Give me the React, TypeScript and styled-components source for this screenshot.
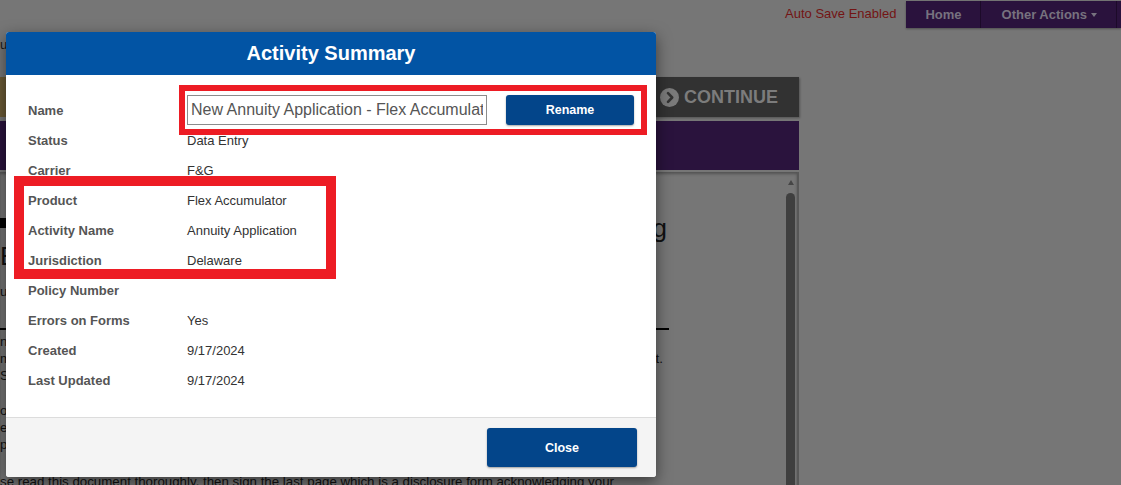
import React from 'react';
import styled, { createGlobalStyle } from 'styled-components';

const GlobalStyle = createGlobalStyle`
  *, *::before, *::after { box-sizing: border-box; }
  html, body { margin: 0; padding: 0; }
  body {
    background: #767676;
    font-family: "Liberation Sans", Arial, sans-serif;
    overflow: hidden;
  }
`;

const Page = styled.div`
  position: relative;
  width: 1121px;
  height: 485px;
  overflow: hidden;
  background: #767676;
`;

const TopBar = styled.header`
  display: flex;
  justify-content: flex-end;
  align-items: flex-start;
  height: 28px;
`;

const AutoSave = styled.span`
  color: #731414;
  font-size: 13px;
  line-height: 28px;
  margin-right: 10px;
`;

const Nav = styled.nav`
  display: flex;
  margin-top: 1px;
  height: 27px;
  padding-right: 4px;
  background: #2a123d;
  box-shadow: 0 1px 2px rgba(0, 0, 0, 0.35);
`;

const NavItem = styled.div<{ $pl: number; $pr: number }>`
  display: flex;
  align-items: center;
  padding: 0 ${p => p.$pr}px 0 ${p => p.$pl}px;
  border-right: 1px solid #1c0a29;
  color: #77727f;
  font-size: 13px;
  font-weight: bold;
  line-height: 27px;
`;

const Caret = styled.span`
  width: 0;
  height: 0;
  margin-left: 4px;
  border-left: 3.5px solid transparent;
  border-right: 3.5px solid transparent;
  border-top: 4px solid #77727f;
`;

const Crumb = styled.div`
  height: 49px;
  padding-top: 9px;
  font-size: 13px;
  line-height: 15px;
  color: #1a1a1a;
  white-space: nowrap;
`;

const Main = styled.main`
  width: 799px;
`;

const ActionRow = styled.div`
  display: flex;
  height: 40px;
  margin-bottom: 4px;
`;

const Banner = styled.div`
  flex: 1;
  background: #6b5a35;
`;

const ContinueButton = styled.div`
  display: flex;
  align-items: center;
  gap: 5px;
  padding: 0 21px 0 40px;
  background: #323232;
  color: #7c7c7c;
  font-size: 18px;
  font-weight: bold;
  box-shadow: 1px 1px 2px rgba(0, 0, 0, 0.3);
`;

const PurpleBand = styled.div`
  height: 49px;
  background: #2a133d;
  margin-bottom: 2px;
`;

const Panel = styled.section`
  display: flex;
  height: 320px;
  border-right: 2px solid #585858;
  box-shadow: inset 0 2px 3px rgba(0, 0, 0, 0.3);
`;

const PanelContent = styled.div`
  flex: 1;
  padding-top: 42px;
  color: #111;
  overflow: hidden;
`;

const ScrollTrack = styled.div`
  display: flex;
  flex-direction: column;
  width: 11px;
  padding-top: 8px;
`;

const ArrowUp = styled.div`
  width: 0;
  height: 0;
  margin-left: 2px;
  border-left: 3px solid transparent;
  border-right: 3px solid transparent;
  border-bottom: 5px solid #464646;
`;

const Thumb = styled.div`
  flex: 1;
  width: 9px;
  margin-top: 8px;
  border-radius: 5px 5px 0 0;
  background: #3f3f3f;
`;

const Heading = styled.h2`
  margin: 0;
  font-size: 26px;
  line-height: 28px;
  font-weight: normal;
`;

const HeadingLine = styled.div`
  display: flex;
  justify-content: space-between;
  width: 667px;
  white-space: nowrap;
`;

const BlackMark = styled.span`
  width: 40px;
  height: 10px;
  margin-top: 4px;
  background: #000;
`;

const TextLine = styled.div<{ $mt?: number; $fill?: boolean }>`
  margin-top: ${p => p.$mt ?? 0}px;
  font-size: 13.3px;
  line-height: 17px;
  white-space: nowrap;
  ${p =>
    p.$fill
      ? `width: 663px; white-space: normal; text-align: justify; text-align-last: justify;`
      : ''}
`;

const Rule = styled.hr`
  margin: 28px 0 0;
  width: 669px;
  height: 2px;
  border: 0;
  background: #000;
`;

const Block = styled.div<{ $mt: number }>`
  margin-top: ${p => p.$mt}px;
`;

/* ---------- Modal ---------- */

const Modal = styled.div`
  position: absolute;
  left: 6px;
  top: 32px;
  width: 650px;
  background: #fff;
  border-radius: 3px;
  box-shadow: 0 5px 15px rgba(0, 0, 0, 0.5);
`;

const ModalHeader = styled.div`
  height: 43px;
  background: #0254a4;
  border-radius: 3px 3px 0 0;
  color: #fff;
  font-size: 20px;
  font-weight: bold;
  line-height: 43px;
  text-align: center;
`;

const ModalBody = styled.div`
  padding: 20px 0 22px 22px;
`;

const Row = styled.div`
  display: grid;
  grid-template-columns: 159px 1fr;
  align-items: center;
  height: 30px;
`;

const Label = styled.div`
  color: #555;
  font-size: 13px;
  font-weight: bold;
`;

const Value = styled.div`
  color: #333;
  font-size: 13px;
`;

const NameField = styled.div`
  display: flex;
  align-items: center;
  gap: 19px;
`;

const NameInput = styled.input`
  width: 300px;
  height: 30px;
  margin: 0;
  padding: 0 3px;
  border: 1px solid #8c8c8c;
  border-radius: 0;
  color: #555;
  font-family: "Liberation Sans", Arial, sans-serif;
  font-size: 16px;
  outline: none;
`;

const PrimaryButton = styled.button<{ $w: number; $h: number }>`
  width: ${p => p.$w}px;
  height: ${p => p.$h}px;
  margin: 0;
  padding: 0;
  border: 0;
  border-radius: 3px;
  background: #03458a;
  color: #fff;
  font-family: "Liberation Sans", Arial, sans-serif;
  font-size: 12.5px;
  font-weight: bold;
  box-shadow: 0 1px 2px rgba(0, 0, 0, 0.35);
  cursor: pointer;
`;

const ModalFooter = styled.div`
  display: flex;
  justify-content: flex-end;
  align-items: flex-start;
  height: 60px;
  padding: 10px 19px 0 0;
  border-top: 1px solid #dcdcdc;
  border-radius: 0 0 3px 3px;
  background: #f4f4f4;
`;

const Annotation = styled.div<{ $l: number; $t: number; $w: number; $h: number; $b: number }>`
  position: absolute;
  left: ${p => p.$l}px;
  top: ${p => p.$t}px;
  width: ${p => p.$w}px;
  height: ${p => p.$h}px;
  border: ${p => p.$b}px solid #ed1c24;
  pointer-events: none;
`;

const rows: [string, string][] = [
  ['Status', 'Data Entry'],
  ['Carrier', 'F&G'],
  ['Product', 'Flex Accumulator'],
  ['Activity Name', 'Annuity Application'],
  ['Jurisdiction', 'Delaware'],
  ['Policy Number', ''],
  ['Errors on Forms', 'Yes'],
  ['Created', '9/17/2024'],
  ['Last Updated', '9/17/2024'],
];

const ContinueIcon = () => (
  <svg width="19" height="19" viewBox="0 0 19 19">
    <circle cx="9.5" cy="9.5" r="9.5" fill="#7a7a7a" />
    <path d="M8 5.2 L12.2 9.5 L8 13.8" fill="none" stroke="#323232" strokeWidth="2.6" strokeLinecap="round" strokeLinejoin="round" />
  </svg>
);

export default function App() {
  return (
    <Page>
      <GlobalStyle />
      <TopBar>
        <AutoSave>Auto Save Enabled</AutoSave>
        <Nav>
          <NavItem $pl={19} $pr={18}>Home</NavItem>
          <NavItem $pl={21} $pr={19}>
            Other Actions
            <Caret />
          </NavItem>
        </Nav>
      </TopBar>
      <Crumb>ul</Crumb>
      <Main>
        <ActionRow>
          <Banner />
          <ContinueButton>
            <ContinueIcon />
            CONTINUE
          </ContinueButton>
        </ActionRow>
        <PurpleBand />
        <Panel>
          <PanelContent>
            <Heading>
              <HeadingLine>
                <BlackMark />
                <span>Important Information Regarding</span>
              </HeadingLine>
              <div>Equity Indexed Annuities and Your Contract</div>
            </Heading>
            <TextLine $mt={13}>understand the terms of this contract.</TextLine>
            <Rule />
            <Block $mt={3}>
              <TextLine>nk you for choosing this annuity. The following pages describe the features of your contract.</TextLine>
              <TextLine $fill>make sure that you review each of the disclosures carefully before you sign this contract.</TextLine>
              <TextLine>Sign each form where indicated and keep a copy of the completed packet for your records.</TextLine>
            </Block>
            <Block $mt={18}>
              <TextLine>or questions about this product, contact your F&amp;G representative or the home office.</TextLine>
              <TextLine>ensure that all required fields on each of the forms have been completed.</TextLine>
              <TextLine>please note that incomplete applications may delay processing.</TextLine>
            </Block>
            <TextLine $mt={20}>
              se read this document thoroughly, then sign the last page which is a disclosure form acknowledging your
            </TextLine>
          </PanelContent>
          <ScrollTrack>
            <ArrowUp />
            <Thumb />
          </ScrollTrack>
        </Panel>
      </Main>

      <Modal>
        <ModalHeader>Activity Summary</ModalHeader>
        <ModalBody>
          <Row>
            <Label>Name</Label>
            <NameField>
              <NameInput readOnly value="New Annuity Application - Flex Accumulator" />
              <PrimaryButton $w={128} $h={30}>Rename</PrimaryButton>
            </NameField>
          </Row>
          {rows.map(([label, value]) => (
            <Row key={label}>
              <Label>{label}</Label>
              <Value>{value}</Value>
            </Row>
          ))}
        </ModalBody>
        <ModalFooter>
          <PrimaryButton $w={150} $h={39}>Close</PrimaryButton>
        </ModalFooter>
        <Annotation $l={173} $t={53} $w={468} $h={50} $b={6} />
        <Annotation $l={8} $t={144} $w={322} $h={103} $b={10} />
      </Modal>
    </Page>
  );
}
